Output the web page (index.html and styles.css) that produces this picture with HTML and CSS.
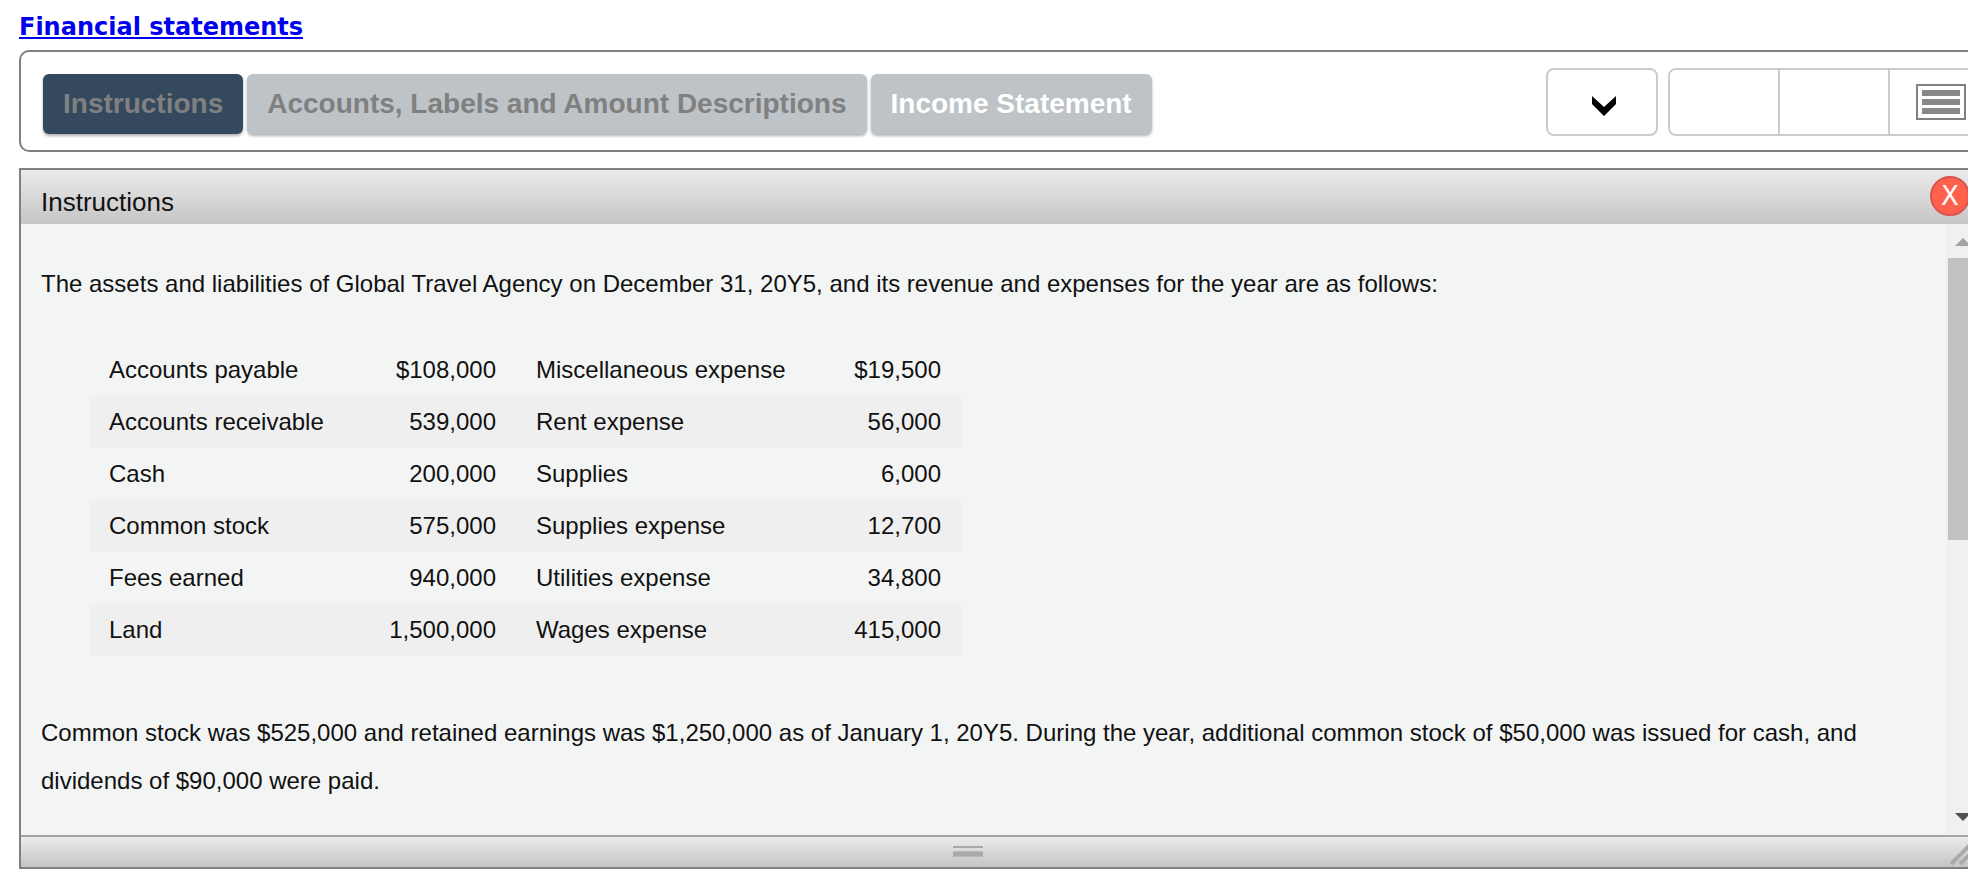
FILE: index.html
```html
<!DOCTYPE html>
<html lang="en">
<head>
    <meta charset="UTF-8">
    <meta name="viewport" content="width=device-width, initial-scale=1.0">
    <title>Financial statements</title>
    <link rel="stylesheet" href="styles.css">
</head>
<body>
    <div class="page">
        <a class="page-link" href="#">Financial statements</a>

        <div class="toolbar">
            <div class="tabs">
                <button type="button" class="tab active">Instructions</button>
                <button type="button" class="tab">Accounts, Labels and Amount Descriptions</button>
                <button type="button" class="tab current">Income Statement</button>
            </div>
            <div class="tools">
                <button type="button" class="tool single" aria-label="Show more">
                    <svg class="chevron" width="26" height="22" viewBox="0 0 26 22">
                        <path d="M1 1 L13 12 L25 1 V9 L13 21 L1 9 Z" fill="#000"/>
                    </svg>
                </button>
                <div class="tool-group">
                    <button type="button" class="tool" aria-label="Previous"></button>
                    <button type="button" class="tool" aria-label="Next"></button>
                    <button type="button" class="tool list" aria-label="List">
                        <svg width="50" height="36" viewBox="0 0 50 36">
                            <rect x="1" y="1" width="48" height="34" fill="#fff" stroke="#808080" stroke-width="2"/>
                            <path d="M6 9 H44 M6 18 H44 M6 27 H44" stroke="#888" stroke-width="6"/>
                        </svg>
                    </button>
                </div>
            </div>
        </div>

        <div class="panel">
            <div class="panel-header">
                <h2>Instructions</h2>
                <button type="button" class="close" aria-label="Close">X</button>
            </div>
            <div class="panel-body">
                <div class="content">
                    <p>The assets and liabilities of Global Travel Agency on December 31, 20Y5, and its revenue and expenses for the year are as follows:</p>
                    <table>
                        <tr><td class="name">Accounts payable</td><td class="amount">$108,000</td><td class="name-wide">Miscellaneous expense</td><td class="amount">$19,500</td></tr>
                        <tr><td>Accounts receivable</td><td class="amount">539,000</td><td>Rent expense</td><td class="amount">56,000</td></tr>
                        <tr><td>Cash</td><td class="amount">200,000</td><td>Supplies</td><td class="amount">6,000</td></tr>
                        <tr><td>Common stock</td><td class="amount">575,000</td><td>Supplies expense</td><td class="amount">12,700</td></tr>
                        <tr><td>Fees earned</td><td class="amount">940,000</td><td>Utilities expense</td><td class="amount">34,800</td></tr>
                        <tr><td>Land</td><td class="amount">1,500,000</td><td>Wages expense</td><td class="amount">415,000</td></tr>
                    </table>
                    <p>Common stock was $525,000 and retained earnings was $1,250,000 as of January 1, 20Y5. During the year, additional common stock of $50,000 was issued for cash, and dividends of $90,000 were paid.</p>
                </div>
                <div class="scrollbar">
                    <svg width="16" height="8" viewBox="0 0 16 8"><path d="M0 8 L8 0 L16 8 Z" fill="#a3a3a3"/></svg>
                    <div class="track"><div class="thumb"></div></div>
                    <svg width="16" height="8" viewBox="0 0 16 8"><path d="M0 0 H16 L8 8 Z" fill="#505050"/></svg>
                </div>
            </div>
            <div class="panel-footer">
                <svg class="grip" width="32" height="12" viewBox="0 0 32 12">
                    <path d="M1 1 H31" stroke="#a8a8a8" stroke-width="2"/>
                    <path d="M1 8 H31" stroke="#b8b8b8" stroke-width="6"/>
                    <path d="M1 8 H31" stroke="#aaa" stroke-width="4"/>
                </svg>
                <svg class="resize" width="32" height="28" viewBox="0 0 32 28">
                    <path d="M3 25 L28 0 M12 25 L32 5" stroke="#aaa" stroke-width="4"/>
                </svg>
            </div>
        </div>
    </div>
</body>
</html>
```
FILE: styles.css
```css
body {
    font-family: "Liberation Sans", Arial, sans-serif;
    font-size: 24px;
    color: #111;
    background-color: #fff;
    margin: 0;
    overflow-x: hidden;
}

button {
    font-family: inherit;
    padding: 0;
    cursor: pointer;
}

/* the page runs a little past the right edge of the window */
.page {
    margin: 13px -14px 0 19px;
}

.page-link {
    display: block;
    width: fit-content;
    font-family: Verdana, "DejaVu Sans", sans-serif;
    font-weight: bold;
    line-height: 28px;
    color: #0000ee;
}

.toolbar {
    display: flex;
    justify-content: space-between;
    align-items: center;
    box-sizing: border-box;
    height: 102px;
    margin: 9px -36px 16px 0;
    padding: 2px 16px 0 22px;
    border: 2px solid #808080;
    border-radius: 10px;
}

.tabs {
    display: flex;
    gap: 4px;
    padding-top: 4px;
}

.tab {
    height: 60px;
    padding: 0 20px;
    font-size: 28px;
    font-weight: bold;
    white-space: nowrap;
    color: #808080;
    background-color: #bdc3c7;
    border: none;
    border-radius: 6px;
    box-shadow: 0 2px 3px rgba(0, 0, 0, 0.3);
}

.tab.active {
    background-color: #34495e;
}

.tab.current {
    color: #fff;
}

.tools {
    display: flex;
    gap: 10px;
}

.tool {
    display: flex;
    justify-content: center;
    align-items: center;
    width: 110px;
    height: 64px;
    background-color: #fff;
    border: none;
    border-left: 2px solid #ccc;
}

.tool-group {
    display: flex;
    border: 2px solid #ccc;
    border-radius: 8px;
    overflow: hidden;
}

.tool-group .tool:first-child {
    width: 108px;
    border-left: none;
}

.tool.list {
    box-sizing: border-box;
    padding-right: 6px;
}

.tool.single {
    box-sizing: border-box;
    width: 112px;
    height: 68px;
    border: 2px solid #ccc;
    border-radius: 8px;
}

.chevron {
    margin: 8px 0 0 4px;
}

.panel {
    border: 2px solid #808080;
}

.panel-header {
    display: flex;
    justify-content: space-between;
    align-items: center;
    height: 54px;
    padding: 0 10px 0 20px;
    background: linear-gradient(#ebebeb, #c5c5c5);
}

.panel-header h2 {
    margin: 10px 0 0;
    font-size: 26px;
    font-weight: normal;
    line-height: 30px;
}

.close {
    width: 40px;
    height: 40px;
    margin-bottom: 2px;
    font-family: Verdana, "DejaVu Sans", sans-serif;
    font-size: 26px;
    line-height: 34px;
    color: #fff;
    background-color: #ff614c;
    border: 2px solid #d9534f;
    border-radius: 50%;
}

.panel-body {
    display: flex;
    background-color: #f3f5f4;
}

.content {
    flex: 1;
    padding: 36px 20px 30px;
}

.content p {
    margin: 0;
    line-height: 48px;
}

table {
    table-layout: fixed;
    width: 872px;
    margin: 36px 0 53px 48px;
    border-collapse: collapse;
}

td {
    box-sizing: border-box;
    height: 52px;
    padding: 0 20px;
    line-height: 52px;
    white-space: nowrap;
}

tr:nth-child(even) {
    background-color: #efefef;
}

.name {
    width: 263px;
}

.name-wide {
    width: 281px;
}

.amount {
    width: 164px;
    text-align: right;
}

.scrollbar {
    display: flex;
    flex-direction: column;
    align-items: center;
    box-sizing: border-box;
    width: 34px;
    padding: 14px 0;
    background-color: #f0f0f0;
}

.track {
    flex: 1;
    width: 30px;
    margin: 12px 0;
}

.thumb {
    height: 52%;
    background-color: #c1c1c1;
}

.panel-footer {
    display: flex;
    justify-content: center;
    align-items: center;
    position: relative;
    height: 30px;
    padding-right: 66px;
    background: linear-gradient(#ebebeb, #c5c5c5);
    border-top: 2px solid #a5a5a5;
}

.resize {
    position: absolute;
    right: 0;
    bottom: 0;
}
```
